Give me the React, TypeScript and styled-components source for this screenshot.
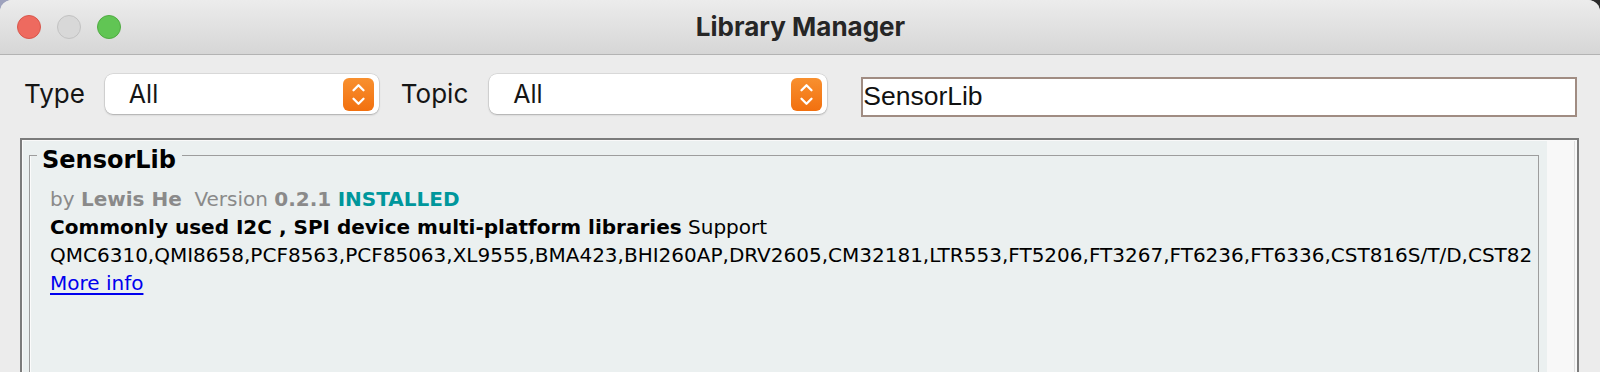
import React from "react";
import styled, { createGlobalStyle } from "styled-components";

const GlobalStyle = createGlobalStyle`
  html, body {
    margin: 0;
    padding: 0;
    overflow: hidden;
    background: linear-gradient(to right, #9ea2bd 0%, #6a6d80 50%, #2c2c2c 100%);
  }
  * { box-sizing: border-box; }
`;

const Window = styled.div`
  width: 1600px;
  height: 372px;
  display: flex;
  flex-direction: column;
  background: #ececec;
  border-radius: 12px 12px 0 0;
  overflow: hidden;
`;

const TitleBar = styled.div`
  height: 55px;
  flex: none;
  display: grid;
  grid-template-columns: 1fr auto 1fr;
  align-items: center;
  background: linear-gradient(to bottom, #ececec, #d6d6d6);
  border-bottom: 1px solid #b3b3b3;
  padding: 0 16px 0 17px;
`;

const Lights = styled.div`
  display: flex;
  gap: 16px;
  align-items: center;
`;

const Light = styled.span<{ $fill: string; $edge: string }>`
  width: 24px;
  height: 24px;
  border-radius: 50%;
  background: ${(p) => p.$fill};
  border: 1px solid ${(p) => p.$edge};
`;

const Title = styled.div`
  font-family: Inter, "Liberation Sans", sans-serif;
  font-weight: 700;
  font-size: 26px;
  line-height: 54px;
  color: #262626;
`;

const Toolbar = styled.div`
  height: 83px;
  flex: none;
  display: flex;
  align-items: flex-start;
  padding: 19px 23px 0 24px;
`;

const Label = styled.span<{ $gap: number }>`
  font-family: Inter, "Liberation Sans", sans-serif;
  font-size: 26px;
  line-height: 40px;
  color: #151515;
  margin-right: ${(p) => p.$gap}px;
`;

const Select = styled.div<{ $width: number }>`
  width: ${(p) => p.$width}px;
  height: 40px;
  flex: none;
  display: flex;
  align-items: center;
  justify-content: space-between;
  background: #ffffff;
  border-radius: 8px;
  box-shadow: 0 0 0 0.5px rgba(0, 0, 0, 0.14), 0 1px 2px rgba(0, 0, 0, 0.22);
  padding: 0 5px 0 24px;
  margin-right: 22px;
  font-family: Inter, "Liberation Sans", sans-serif;
  font-size: 25px;
  color: #151515;
`;

const Stepper = styled.span`
  width: 31px;
  height: 33px;
  border-radius: 6px;
  background: linear-gradient(to bottom, #f8902f, #f2700f);
  display: flex;
  align-items: center;
  justify-content: center;
`;

const Search = styled.div`
  flex: 1;
  height: 40px;
  margin: 3px 0 0 12px;
  background: #ffffff;
  border: 2px solid #a08c82;
  padding: 0 4px 2px 0;
  display: flex;
  align-items: center;
  font-family: "Liberation Sans", Arial, sans-serif;
  font-size: 26.5px;
  color: #111;
`;

const Panel = styled.div`
  flex: 1;
  margin: 0 21px 0 20px;
  border: 2px solid #7b7b7b;
  border-bottom: none;
  display: flex;
  background: #f9f9f9;
  padding: 1px 0 0 1px;
  min-height: 0;
`;

const ListArea = styled.div`
  flex: 1;
  background: #ebf0f0;
  padding: 0 8px 0 6px;
  display: flex;
  flex-direction: column;
  min-width: 0;
`;

const Scroll = styled.div`
  width: 28px;
  flex: none;
  background: #f8f8f8;
  border-right: 1px solid #dedede;
  margin-right: 2px;
`;

const Item = styled.fieldset`
  margin: 0;
  padding: 0;
  flex: 1;
  min-width: 0;
  border: 1px solid #9d9d9d;
  border-bottom: none;
  box-shadow: inset 1px 0 0 #fbfbfb;
`;

const ItemTitle = styled.legend`
  margin-left: 7px;
  padding: 10px 6px 0 5px;
  font-family: "DejaVu Sans", Verdana, sans-serif;
  font-weight: 700;
  font-size: 24px;
  line-height: 18px;
  color: #000;
`;

const Body = styled.div`
  padding: 16px 0 0 20px;
  font-family: "DejaVu Sans", Verdana, sans-serif;
  font-size: 20px;
  line-height: 28px;
  color: #000;
  white-space: nowrap;
  overflow: hidden;
`;

const Line = styled.div``;

const Meta = styled.span<{ $bold?: boolean; $accent?: boolean }>`
  color: ${(p) => (p.$accent ? "#00979c" : "#8a8a8a")};
  font-weight: ${(p) => (p.$bold ? 700 : 400)};
`;

const Strong = styled.b`
  font-weight: 700;
`;

const MoreLink = styled.a`
  color: #0000ee;
  text-decoration: underline;
  text-underline-offset: 3px;
  cursor: pointer;
`;

const Chevrons = () => (
  <svg width="31" height="33" viewBox="0 0 31 33">
    <path d="M10.5 12.3 L15.5 7.3 L20.5 12.3" fill="none" stroke="#fff" strokeWidth="2.3" strokeLinecap="round" strokeLinejoin="round" />
    <path d="M10.5 20.7 L15.5 25.7 L20.5 20.7" fill="none" stroke="#fff" strokeWidth="2.3" strokeLinecap="round" strokeLinejoin="round" />
  </svg>
);

export default function App() {
  return (
    <>
      <GlobalStyle />
      <Window>
        <TitleBar>
          <Lights>
            <Light $fill="#ee6a5f" $edge="#d8574c" />
            <Light $fill="#d8d8d8" $edge="#c2c2c2" />
            <Light $fill="#61c554" $edge="#50ab42" />
          </Lights>
          <Title>Library Manager</Title>
          <span />
        </TitleBar>
        <Toolbar>
          <Label $gap={20}>Type</Label>
          <Select $width={274}>
            All
            <Stepper>
              <Chevrons />
            </Stepper>
          </Select>
          <Label $gap={21}>Topic</Label>
          <Select $width={338}>
            All
            <Stepper>
              <Chevrons />
            </Stepper>
          </Select>
          <Search>SensorLib</Search>
        </Toolbar>
        <Panel>
          <ListArea>
            <Item>
              <ItemTitle>SensorLib</ItemTitle>
              <Body>
                <Line>
                  <Meta>by </Meta>
                  <Meta $bold>Lewis He</Meta>
                  <Meta>{"\u00a0 Version "}</Meta>
                  <Meta $bold>0.2.1</Meta> <Meta $bold $accent>INSTALLED</Meta>
                </Line>
                <Line>
                  <Strong>Commonly used I2C , SPI device multi-platform libraries</Strong> Support
                </Line>
                <Line>
                  QMC6310,QMI8658,PCF8563,PCF85063,XL9555,BMA423,BHI260AP,DRV2605,CM32181,LTR553,FT5206,FT3267,FT6236,FT6336,CST816S/T/D,CST82
                </Line>
                <Line>
                  <MoreLink>More info</MoreLink>
                </Line>
              </Body>
            </Item>
          </ListArea>
          <Scroll />
        </Panel>
      </Window>
    </>
  );
}
